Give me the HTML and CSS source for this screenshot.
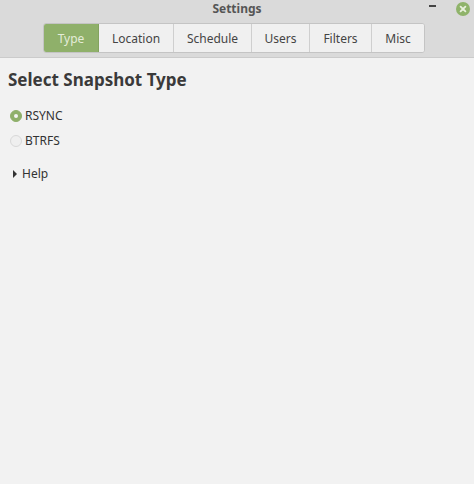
FILE: index.html
```html
<!DOCTYPE html>
<html lang="en">

<head>
    <meta charset="UTF-8">
    <meta name="viewport" content="width=device-width, initial-scale=1.0">
    <title>Settings</title>
    <link rel="stylesheet" href="styles.css">
</head>

<body>
    <div class="window">
        <div class="header-bar">
            <div class="title-row">
                <span class="title">Settings</span>
                <div class="window-buttons">
                    <span class="minimize"></span>
                    <span class="close">
                        <svg width="14" height="14" viewBox="0 0 14 14">
                            <circle cx="7" cy="7" r="7" fill="#8fb36a" />
                            <path d="M4.6 4.6 L9.4 9.4 M9.4 4.6 L4.6 9.4" stroke="#e8f0dc" stroke-width="1.8" stroke-linecap="round" />
                        </svg>
                    </span>
                </div>
            </div>
            <div class="tabs">
                <button class="tab active">Type</button>
                <button class="tab">Location</button>
                <button class="tab">Schedule</button>
                <button class="tab">Users</button>
                <button class="tab">Filters</button>
                <button class="tab">Misc</button>
            </div>
        </div>
        <div class="content">
            <h1 class="section-title">Select Snapshot Type</h1>
            <label class="radio-row">
                <span class="radio checked"></span>
                RSYNC
            </label>
            <label class="radio-row">
                <span class="radio"></span>
                BTRFS
            </label>
            <div class="expander">
                <span class="arrow"></span>
                Help
            </div>
        </div>
    </div>
</body>

</html>
```

FILE: styles.css
```css
body {
    margin: 0;
    background-color: #f2f2f2;
    font-family: "Noto Sans", "Open Sans", sans-serif;
    color: #333;
}

.window {
    width: 474px;
    height: 484px;
    display: flex;
    flex-direction: column;
}

.header-bar {
    height: 58px;
    background-color: #dadada;
    border-bottom: 1px solid #cbcbcb;
    box-sizing: border-box;
}

.title-row {
    height: 17px;
    display: flex;
    justify-content: center;
    align-items: center;
    position: relative;
}

.title {
    font-size: 12px;
    font-weight: bold;
    color: #555;
}

.window-buttons {
    position: absolute;
    right: 4px;
    top: 0;
    display: flex;
    align-items: center;
    gap: 20px;
}

.minimize {
    width: 7px;
    height: 2px;
    background-color: #444;
    margin-top: -4px;
}

.close {
    display: flex;
    margin-top: 2px;
}

.tabs {
    display: flex;
    margin-left: 43px;
    margin-top: 6px;
    width: 382px;
    height: 30px;
    border: 1px solid #c4c4c4;
    border-radius: 3px;
    box-sizing: border-box;
    overflow: hidden;
    background-color: #f0f0f0;
}

.tab {
    font-family: inherit;
    font-size: 12px;
    color: #444;
    background-color: #f0f0f0;
    border: none;
    border-right: 1px solid #cfcfcf;
    padding: 0;
}

.tab:last-child {
    border-right: none;
}

.tab:nth-child(1) { width: 55px; }
.tab:nth-child(2) { width: 75px; }
.tab:nth-child(3) { width: 78px; }
.tab:nth-child(4) { width: 58px; }
.tab:nth-child(5) { width: 62px; }
.tab:nth-child(6) { flex: 1; }

.tab.active {
    background-color: #8fb06a;
    color: #e4ecd8;
    border-right-color: #83a35f;
}

.content {
    flex: 1;
    padding: 10px 8px;
}

.section-title {
    margin: 0 0 12px 0;
    font-size: 17px;
    font-weight: bold;
    color: #3a3a3a;
}

.radio-row {
    display: flex;
    align-items: center;
    gap: 3px;
    height: 25px;
    font-size: 12px;
    color: #333;
    padding-left: 2px;
}

.radio {
    width: 12px;
    height: 12px;
    border-radius: 50%;
    border: 1px solid #d8d8d8;
    background-color: #efefef;
    box-sizing: border-box;
    position: relative;
}

.radio.checked {
    background-color: #8fb06a;
    border-color: #8fb06a;
}

.radio.checked::after {
    content: "";
    position: absolute;
    left: 3px;
    top: 3px;
    width: 4px;
    height: 4px;
    border-radius: 50%;
    background-color: #f4f4f4;
}

.expander {
    display: flex;
    align-items: center;
    gap: 5px;
    margin-top: 12px;
    padding-left: 5px;
    font-size: 12px;
    color: #333;
}

.arrow {
    width: 0;
    height: 0;
    border-top: 4px solid transparent;
    border-bottom: 4px solid transparent;
    border-left: 4px solid #333;
}
```
